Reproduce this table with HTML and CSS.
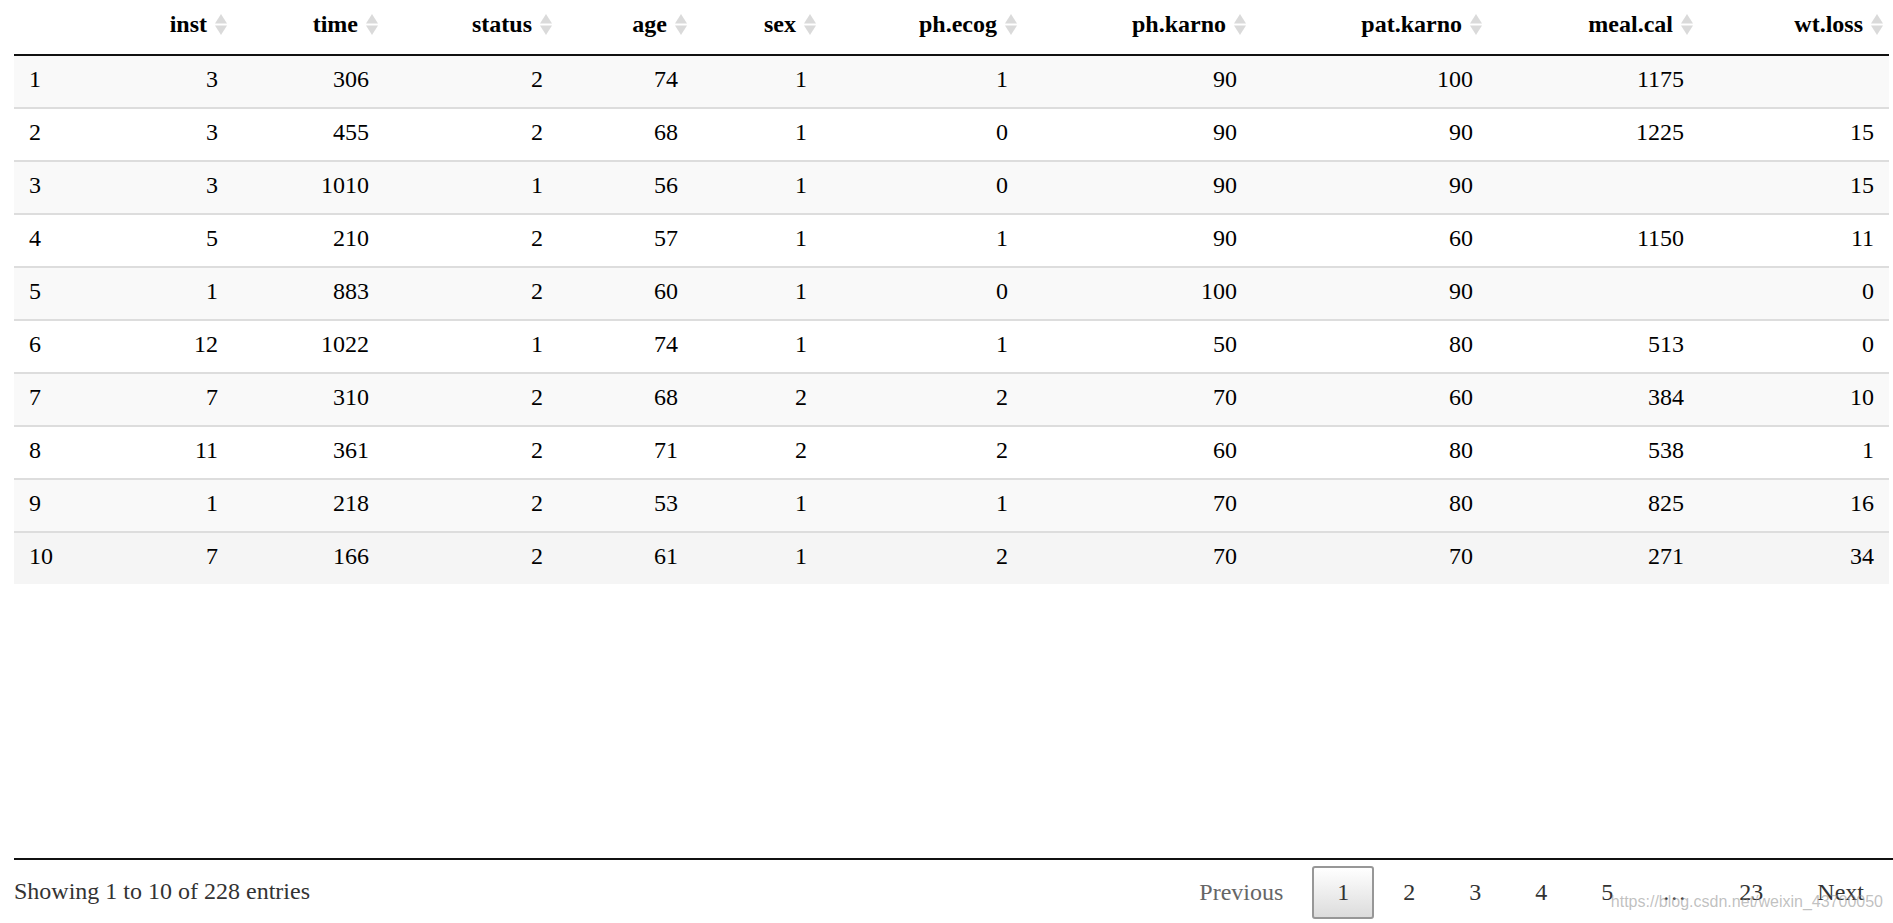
FILE: index.html
```html
<!DOCTYPE html>
<html lang="en">
<head>
<meta charset="utf-8">
<title>survival::lung</title>
<link rel="stylesheet" href="styles.css">
</head>
<body>
<div class="wrapper">
  <div class="scroll">
    <table class="dt">
      <thead>
        <tr>
          <th class="rn c0"></th>
          <th class="c1">inst<svg class="sort" viewBox="0 0 12 21"><path d="M0 9.5 L6 0 L12 9.5 Z"/><path d="M0 11.5 L12 11.5 L6 21 Z"/></svg></th>
          <th class="c2">time<svg class="sort" viewBox="0 0 12 21"><path d="M0 9.5 L6 0 L12 9.5 Z"/><path d="M0 11.5 L12 11.5 L6 21 Z"/></svg></th>
          <th class="c3">status<svg class="sort" viewBox="0 0 12 21"><path d="M0 9.5 L6 0 L12 9.5 Z"/><path d="M0 11.5 L12 11.5 L6 21 Z"/></svg></th>
          <th class="c4">age<svg class="sort" viewBox="0 0 12 21"><path d="M0 9.5 L6 0 L12 9.5 Z"/><path d="M0 11.5 L12 11.5 L6 21 Z"/></svg></th>
          <th class="c5">sex<svg class="sort" viewBox="0 0 12 21"><path d="M0 9.5 L6 0 L12 9.5 Z"/><path d="M0 11.5 L12 11.5 L6 21 Z"/></svg></th>
          <th class="c6">ph.ecog<svg class="sort" viewBox="0 0 12 21"><path d="M0 9.5 L6 0 L12 9.5 Z"/><path d="M0 11.5 L12 11.5 L6 21 Z"/></svg></th>
          <th class="c7">ph.karno<svg class="sort" viewBox="0 0 12 21"><path d="M0 9.5 L6 0 L12 9.5 Z"/><path d="M0 11.5 L12 11.5 L6 21 Z"/></svg></th>
          <th class="c8">pat.karno<svg class="sort" viewBox="0 0 12 21"><path d="M0 9.5 L6 0 L12 9.5 Z"/><path d="M0 11.5 L12 11.5 L6 21 Z"/></svg></th>
          <th class="c9">meal.cal<svg class="sort" viewBox="0 0 12 21"><path d="M0 9.5 L6 0 L12 9.5 Z"/><path d="M0 11.5 L12 11.5 L6 21 Z"/></svg></th>
          <th class="c10">wt.loss<svg class="sort" viewBox="0 0 12 21"><path d="M0 9.5 L6 0 L12 9.5 Z"/><path d="M0 11.5 L12 11.5 L6 21 Z"/></svg></th>
        </tr>
      </thead>
      <tbody>
        <tr class="odd"><td class="rn">1</td><td>3</td><td>306</td><td>2</td><td>74</td><td>1</td><td>1</td><td>90</td><td>100</td><td>1175</td><td></td></tr>
        <tr class="even"><td class="rn">2</td><td>3</td><td>455</td><td>2</td><td>68</td><td>1</td><td>0</td><td>90</td><td>90</td><td>1225</td><td>15</td></tr>
        <tr class="odd"><td class="rn">3</td><td>3</td><td>1010</td><td>1</td><td>56</td><td>1</td><td>0</td><td>90</td><td>90</td><td></td><td>15</td></tr>
        <tr class="even"><td class="rn">4</td><td>5</td><td>210</td><td>2</td><td>57</td><td>1</td><td>1</td><td>90</td><td>60</td><td>1150</td><td>11</td></tr>
        <tr class="odd"><td class="rn">5</td><td>1</td><td>883</td><td>2</td><td>60</td><td>1</td><td>0</td><td>100</td><td>90</td><td></td><td>0</td></tr>
        <tr class="even"><td class="rn">6</td><td>12</td><td>1022</td><td>1</td><td>74</td><td>1</td><td>1</td><td>50</td><td>80</td><td>513</td><td>0</td></tr>
        <tr class="odd"><td class="rn">7</td><td>7</td><td>310</td><td>2</td><td>68</td><td>2</td><td>2</td><td>70</td><td>60</td><td>384</td><td>10</td></tr>
        <tr class="even"><td class="rn">8</td><td>11</td><td>361</td><td>2</td><td>71</td><td>2</td><td>2</td><td>60</td><td>80</td><td>538</td><td>1</td></tr>
        <tr class="odd"><td class="rn">9</td><td>1</td><td>218</td><td>2</td><td>53</td><td>1</td><td>1</td><td>70</td><td>80</td><td>825</td><td>16</td></tr>
        <tr class="even hover"><td class="rn">10</td><td>7</td><td>166</td><td>2</td><td>61</td><td>1</td><td>2</td><td>70</td><td>70</td><td>271</td><td>34</td></tr>
      </tbody>
    </table>
  </div>
  <div class="footer">
    <div class="info">Showing 1 to 10 of 228 entries</div>
    <div class="paginate">
      <a class="btn disabled">Previous</a>
      <a class="btn current">1</a>
      <a class="btn">2</a>
      <a class="btn">3</a>
      <a class="btn">4</a>
      <a class="btn">5</a>
      <span class="ellipsis">…</span>
      <a class="btn">23</a>
      <a class="btn">Next</a>
    </div>
  </div>
  <div class="watermark">https://blog.csdn.net/weixin_43700050</div>
</div>
</body>
</html>
```

FILE: styles.css
```css
html, body {
  margin: 0;
  padding: 0;
  background: #fff;
}

body {
  font-family: "Liberation Serif", "Times New Roman", serif;
  font-size: 24px;
  color: #000;
}

.wrapper {
  position: relative;
  margin-left: 14px;
  width: 1879px;
}

.scroll {
  height: 858px;
  border-bottom: 2px solid #111;
}

.dt {
  table-layout: fixed;
  width: 1875px;
  border-collapse: separate;
  border-spacing: 0;
}

.dt th,
.dt td {
  box-sizing: border-box;
  line-height: 27px;
  white-space: nowrap;
}

.dt th {
  padding: 11px 6px 16px 15px;
  font-weight: bold;
  text-align: right;
  border-bottom: 2px solid #111;
}

.dt th.rn {
  text-align: left;
}

.c0 { width: 96px; }
.c1 { width: 123px; }
.c2 { width: 151px; }
.c3 { width: 174px; }
.c4 { width: 135px; }
.c5 { width: 129px; }
.c6 { width: 201px; }
.c7 { width: 229px; }
.c8 { width: 236px; }
.c9 { width: 211px; }
.c10 { width: 190px; }

.sort {
  display: inline-block;
  width: 12px;
  height: 21px;
  margin-left: 8px;
  vertical-align: -3px;
  fill: #dadada;
}

.dt td {
  padding: 10px 15px 14px;
  text-align: right;
}

.dt td.rn {
  text-align: left;
}

.dt tbody tr + tr td {
  border-top: 2px solid #ddd;
}

.dt tr.odd {
  background: #f9f9f9;
}

.dt tr.even {
  background: #fff;
}

.dt tr.hover {
  background: #f5f5f5;
}

.footer {
  display: flex;
  justify-content: space-between;
  align-items: flex-start;
  width: 1875px;
  color: #333;
}

.info {
  padding-top: 18px;
  line-height: 27px;
}

.paginate {
  display: flex;
  align-items: flex-start;
  padding-top: 6px;
}

.btn {
  box-sizing: border-box;
  display: block;
  padding: 11px 23px;
  margin-left: 4px;
  line-height: 27px;
  border: 2px solid transparent;
  border-radius: 3px;
  color: #333;
  text-align: center;
  cursor: pointer;
}

.btn.disabled {
  color: #666;
  margin-left: 0;
  cursor: default;
}

.btn.current {
  border-color: #979797;
  background: linear-gradient(to bottom, #fff 0%, #dcdcdc 100%);
}

.ellipsis {
  display: block;
  padding: 13px 24px 0;
  line-height: 27px;
  color: #333;
}

.watermark {
  position: absolute;
  right: 10px;
  top: 893px;
  font-family: "Liberation Sans", Arial, sans-serif;
  font-size: 16px;
  line-height: 18px;
  color: rgba(140, 140, 140, 0.55);
  white-space: nowrap;
}
```
